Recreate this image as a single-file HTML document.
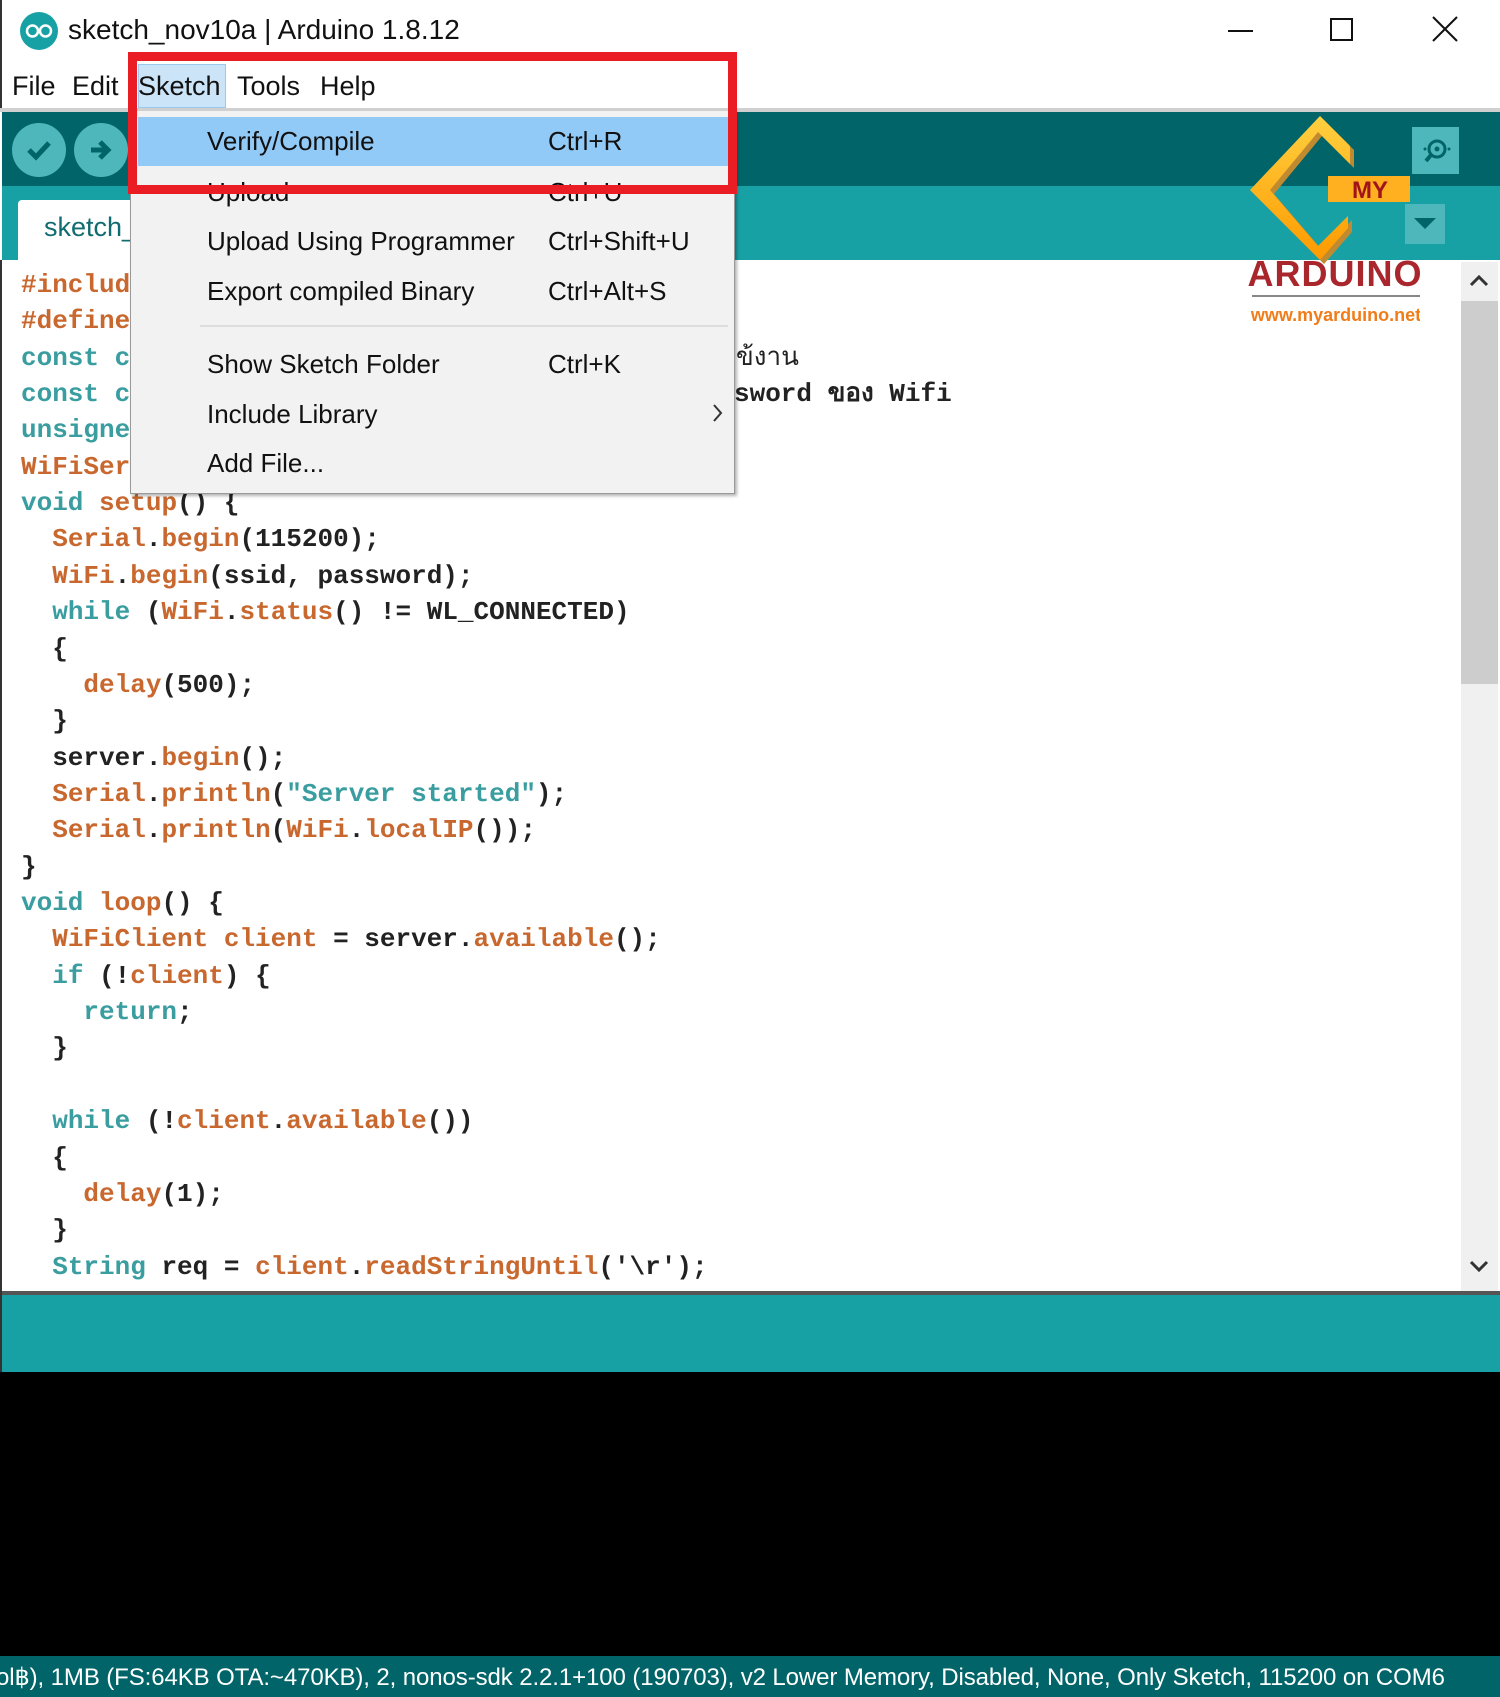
<!DOCTYPE html>
<html><head><meta charset="utf-8"><style>
*{margin:0;padding:0;box-sizing:border-box}
body{width:1500px;height:1697px;position:relative;overflow:hidden;background:#fff;font-family:"Liberation Sans","Noto Sans CJK SC",sans-serif}
.abs{position:absolute}
.code{position:absolute;left:21px;font-family:"Liberation Mono",monospace;font-size:26px;font-weight:bold;line-height:36px;white-space:pre;color:#222}
.k{color:#3a9da0}.f{color:#c8682f}
.mi{position:absolute;left:207px;font-size:26px;color:#111}
.ms{position:absolute;left:548px;font-size:26px;color:#111}
</style></head><body>
<div class="abs" style="left:0;top:0;width:1500px;height:108px;background:#fff;border-left:2px solid #333"></div>
<svg class="abs" style="left:19px;top:11px" width="40" height="40" viewBox="0 0 40 40"><circle cx="20" cy="20" r="19" fill="#17A1A5"/><circle cx="13.5" cy="20" r="5.5" fill="none" stroke="#fff" stroke-width="2.5"/><circle cx="26.5" cy="20" r="5.5" fill="none" stroke="#fff" stroke-width="2.5"/></svg>
<div class="abs" style="left:68px;top:14px;font-size:28px;color:#111">sketch_nov10a | Arduino 1.8.12</div>
<div class="abs" style="left:1228px;top:30px;width:25px;height:2px;background:#111"></div>
<div class="abs" style="left:1330px;top:18px;width:23px;height:23px;border:2px solid #111"></div>
<svg class="abs" style="left:1432px;top:16px" width="26" height="26"><path d="M1 1L25 25M25 1L1 25" stroke="#111" stroke-width="2"/></svg>
<div class="abs" style="left:12px;top:71px;font-size:27px;color:#111">File</div>
<div class="abs" style="left:72px;top:71px;font-size:27px;color:#111">Edit</div>
<div class="abs" style="left:0;top:108px;width:1500px;height:4px;background:#d0d0d0"></div>
<div class="abs" style="left:2px;top:112px;width:1498px;height:74px;background:#006468"></div>
<div class="abs" style="left:12px;top:123px;width:54px;height:54px;border-radius:50%;background:#4db7bb"></div>
<svg class="abs" style="left:24px;top:135px" width="30" height="30"><path d="M5 15L12 22L25 8" stroke="#006468" stroke-width="5" fill="none"/></svg>
<div class="abs" style="left:74px;top:123px;width:54px;height:54px;border-radius:50%;background:#4db7bb"></div>
<svg class="abs" style="left:86px;top:135px" width="30" height="30"><path d="M5 15H22M14 7L22 15L14 23" stroke="#006468" stroke-width="5" fill="none"/></svg>
<div class="abs" style="left:1412px;top:127px;width:47px;height:47px;background:#4db7bb"></div>
<svg class="abs" style="left:1417px;top:132px" width="38" height="38"><circle cx="20" cy="17" r="8" fill="none" stroke="#006468" stroke-width="3"/><circle cx="20" cy="17" r="2.5" fill="#006468"/><path d="M14 23L9 29" stroke="#006468" stroke-width="4"/><circle cx="32" cy="17" r="1.5" fill="#006468"/><circle cx="8" cy="17" r="1.5" fill="#006468"/></svg>
<div class="abs" style="left:2px;top:186px;width:1498px;height:74px;background:#17A1A5"></div>
<div class="abs" style="left:18px;top:200px;width:150px;height:60px;background:#fff;border-radius:4px 4px 0 0"></div>
<div class="abs" style="left:44px;top:212px;font-size:27px;color:#116c70">sketch_</div>
<div class="abs" style="left:1405px;top:204px;width:40px;height:40px;background:#4db7bb"></div>
<svg class="abs" style="left:1412px;top:216px" width="26" height="14"><path d="M2 2H24L13 13Z" fill="#006468"/></svg>
<div class="abs" style="left:0;top:260px;width:2px;height:1433px;background:#333"></div>
<div class="abs" style="left:1461px;top:262px;width:37px;height:1031px;background:#f0f0f0"></div>
<div class="abs" style="left:1461px;top:301px;width:37px;height:383px;background:#cdcdcd"></div>
<svg class="abs" style="left:1468px;top:273px" width="22" height="16"><path d="M3 12L11 4L19 12" stroke="#333" stroke-width="3" fill="none"/></svg>
<svg class="abs" style="left:1468px;top:1258px" width="22" height="16"><path d="M3 4L11 12L19 4" stroke="#333" stroke-width="3" fill="none"/></svg>

<div class="code" style="top:267px"><span class="f">#include</span></div>
<div class="code" style="top:303px"><span class="f">#define</span></div>
<div class="code" style="top:340px"><span class="k">const char</span></div>
<div class="code" style="top:376px"><span class="k">const char</span></div>
<div class="code" style="top:412px"><span class="k">unsigned</span></div>
<div class="code" style="top:449px"><span class="f">WiFiServer</span></div>
<div class="code" style="left:736px;top:340px;font-family:'Liberation Mono','Noto Sans CJK SC',sans-serif;font-weight:normal">ข้งาน</div>
<div class="code" style="left:734px;top:376px">sword ของ Wifi</div>
<div class="code" style="top:485px"><span class="k">void</span> <span class="f">setup</span>() {</div>
<div class="code" style="top:521px">  <span class="f">Serial</span>.<span class="f">begin</span>(115200);</div>
<div class="code" style="top:558px">  <span class="f">WiFi</span>.<span class="f">begin</span>(ssid, password);</div>
<div class="code" style="top:594px">  <span class="k">while</span> (<span class="f">WiFi</span>.<span class="f">status</span>() != WL_CONNECTED)</div>
<div class="code" style="top:631px">  {</div>
<div class="code" style="top:667px">    <span class="f">delay</span>(500);</div>
<div class="code" style="top:703px">  }</div>
<div class="code" style="top:740px">  server.<span class="f">begin</span>();</div>
<div class="code" style="top:776px">  <span class="f">Serial</span>.<span class="f">println</span>(<span class="k">"Server started"</span>);</div>
<div class="code" style="top:812px">  <span class="f">Serial</span>.<span class="f">println</span>(<span class="f">WiFi</span>.<span class="f">localIP</span>());</div>
<div class="code" style="top:849px">}</div>
<div class="code" style="top:885px"><span class="k">void</span> <span class="f">loop</span>() {</div>
<div class="code" style="top:921px">  <span class="f">WiFiClient client</span> = server.<span class="f">available</span>();</div>
<div class="code" style="top:958px">  <span class="k">if</span> (!<span class="f">client</span>) {</div>
<div class="code" style="top:994px">    <span class="k">return</span>;</div>
<div class="code" style="top:1030px">  }</div>
<div class="code" style="top:1103px">  <span class="k">while</span> (!<span class="f">client</span>.<span class="f">available</span>())</div>
<div class="code" style="top:1140px">  {</div>
<div class="code" style="top:1176px">    <span class="f">delay</span>(1);</div>
<div class="code" style="top:1212px">  }</div>
<div class="code" style="top:1249px">  <span class="k">String</span> req = <span class="f">client</span>.<span class="f">readStringUntil</span>('\r');</div>

<div class="abs" style="left:2px;top:1291px;width:1498px;height:4px;background:#555"></div>
<div class="abs" style="left:2px;top:1295px;width:1498px;height:77px;background:#17A1A5"></div>
<div class="abs" style="left:0;top:1372px;width:1500px;height:284px;background:#000"></div>
<div class="abs" style="left:0;top:1656px;width:1500px;height:41px;background:#006468"></div>
<div class="abs" style="left:-4px;top:1663px;font-size:24px;color:#fff;white-space:nowrap;letter-spacing:-0.1px">ol฿), 1MB (FS:64KB OTA:~470KB), 2, nonos-sdk 2.2.1+100 (190703), v2 Lower Memory, Disabled, None, Only Sketch, 115200 on COM6</div>

<svg class="abs" style="left:1220px;top:110px" width="200" height="220" viewBox="0 0 200 220">
<defs><linearGradient id="g" x1="0" y1="0" x2="0" y2="1"><stop offset="0" stop-color="#ffd040"/><stop offset="1" stop-color="#ff9a00"/></linearGradient></defs>
<path d="M100 6L130 36V54L98 22L50 80L98 136L128 106V118L100 150L30 80Z" fill="#c08a30" transform="translate(4,4)"/>
<path d="M100 6L130 36V54L98 22L50 80L98 136L128 106V118L100 150L30 80Z" fill="url(#g)"/>
<rect x="108" y="66" width="82" height="26" fill="#ffb020"/>
<text x="150" y="88" font-family="Liberation Sans" font-weight="bold" font-size="24" fill="#a0141a" text-anchor="middle">MY</text>
<text x="115" y="176" font-family="Liberation Sans" font-weight="bold" font-size="36" fill="#a8262c" text-anchor="middle" letter-spacing="1">ARDUINO</text>
<rect x="32" y="185" width="176" height="2" fill="#888"/>
<text x="116" y="211" font-family="Liberation Sans" font-weight="bold" font-size="18" fill="#f07d1a" text-anchor="middle">www.myarduino.net</text>
</svg>

<div class="abs" style="left:130px;top:110px;width:605px;height:384px;background:#f2f2f2;border:1px solid #999;box-shadow:2px 2px 3px rgba(0,0,0,.3)"></div>
<div class="abs" style="left:138px;top:117px;width:590px;height:49px;background:#91c9f7"></div>
<div class="mi" style="top:126px">Verify/Compile</div><div class="ms" style="top:126px">Ctrl+R</div>
<div class="mi" style="top:177px">Upload</div><div class="ms" style="top:177px">Ctrl+U</div>
<div class="mi" style="top:226px">Upload Using Programmer</div><div class="ms" style="top:226px">Ctrl+Shift+U</div>
<div class="mi" style="top:276px">Export compiled Binary</div><div class="ms" style="top:276px">Ctrl+Alt+S</div>
<div class="abs" style="left:200px;top:325px;width:528px;height:2px;background:#ddd"></div>
<div class="mi" style="top:349px">Show Sketch Folder</div><div class="ms" style="top:349px">Ctrl+K</div>
<div class="mi" style="top:399px">Include Library</div>
<svg class="abs" style="left:712px;top:403px" width="12" height="20"><path d="M2 2L9 10L2 18" stroke="#333" stroke-width="2" fill="none"/></svg>
<div class="mi" style="top:448px">Add File...</div>
<div class="abs" style="left:128px;top:52px;width:609px;height:142px;border:9px solid #ea1c24"></div>
<div class="abs" style="left:137px;top:61px;width:591px;height:47px;background:#fff"></div>
<div class="abs" style="left:138px;top:64px;width:88px;height:44px;background:#cce4f7;border:1px solid #99c9ef"></div>
<div class="abs" style="left:138px;top:71px;font-size:27px;color:#111">Sketch</div>
<div class="abs" style="left:237px;top:71px;font-size:27px;color:#111">Tools</div>
<div class="abs" style="left:320px;top:71px;font-size:27px;color:#111">Help</div>
<div class="abs" style="left:137px;top:108px;width:591px;height:3px;background:#d0d0d0"></div>
</body></html>
